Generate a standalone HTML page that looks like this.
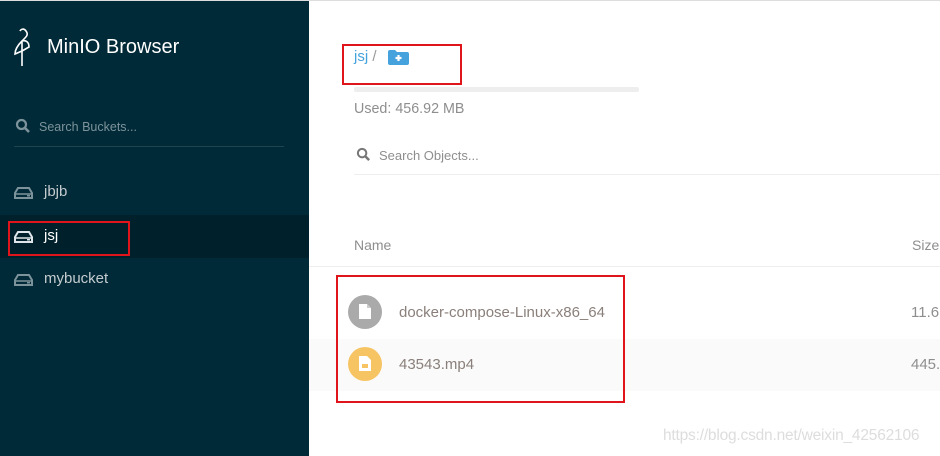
<!DOCTYPE html>
<html><head><style>
*{margin:0;padding:0;box-sizing:border-box}
body{width:940px;height:456px;overflow:hidden;font-family:"Liberation Sans",sans-serif;background:#fff;position:relative}
.sb{position:absolute;left:0;top:0;width:309px;height:456px;background:#002a37;border-top:1px solid #ddd}
.a{position:absolute}
.red{position:absolute;border:2px solid #e0151b}
.bk{position:absolute;left:0;width:309px;height:43px;color:#c5ccd0;font-size:15px}
.bk span{position:absolute;left:44px;top:12px}
.bk svg{position:absolute;left:13px;top:15px}
</style></head><body>
<div class="sb">
<svg class="a" style="left:13px;top:26px" width="22" height="40" viewBox="0 0 22 40" fill="none" stroke="#fff" stroke-width="1.6"><path d="M9 39V14M9 14C13 10 16 8 13 4C11 1 8 2 7 4M9 14C5 18 2 22 2 27L9 24M9 24L16 20C16 15 13 13 9 14"/></svg>
<div class="a" style="left:47px;top:35px;color:#fff;font-size:20px">MinIO Browser</div>
<svg class="a" style="left:15px;top:117px" width="16" height="16" viewBox="0 0 16 16"><circle cx="6.5" cy="6.5" r="4.5" stroke="#7d939b" stroke-width="2.2" fill="none"/><path d="M10 10l4 4" stroke="#7d939b" stroke-width="2.6"/></svg>
<div class="a" style="left:39px;top:119px;color:#7d939b;font-size:12.5px">Search Buckets...</div>
<div class="a" style="left:14px;top:145px;width:270px;height:1px;background:#1e4450"></div>
<div class="bk" style="top:170px"><svg width="21" height="14" viewBox="0 0 21 14"><path d="M2 7L5 2h11l3 5v5H2z" stroke="#7d939b" stroke-width="2" fill="none"/><path d="M2 8h17" stroke="#7d939b" stroke-width="1.5"/><rect x="14" y="9" width="3" height="1.5" fill="#7d939b"/></svg><span>jbjb</span></div>
<div class="bk" style="top:214px;background:#00212b;color:#fff"><svg width="21" height="14" viewBox="0 0 21 14"><path d="M2 7L5 2h11l3 5v5H2z" stroke="#dfe5e8" stroke-width="2" fill="none"/><path d="M2 8h17" stroke="#dfe5e8" stroke-width="1.5"/><rect x="14" y="9" width="3" height="1.5" fill="#dfe5e8"/></svg><span>jsj</span></div>
<div class="bk" style="top:257px"><svg width="21" height="14" viewBox="0 0 21 14"><path d="M2 7L5 2h11l3 5v5H2z" stroke="#7d939b" stroke-width="2" fill="none"/><path d="M2 8h17" stroke="#7d939b" stroke-width="1.5"/><rect x="14" y="9" width="3" height="1.5" fill="#7d939b"/></svg><span>mybucket</span></div>
</div>
<div class="red" style="left:8px;top:221px;width:122px;height:35px"></div>
<div class="a" style="left:309px;top:0;width:631px;height:1px;background:#ddd"></div>
<div class="a" style="left:354px;top:48px;color:#46a2dc;font-size:15px">jsj <span style="color:#999">/</span></div>
<svg class="a" style="left:388px;top:50px" width="21" height="15" viewBox="0 0 21 15"><path d="M0 2a2 2 0 0 1 2-2h5l2 2h10a2 2 0 0 1 2 2v9a2 2 0 0 1-2 2H2a2 2 0 0 1-2-2z" fill="#46a2dc"/><path d="M10.5 5v6M7.5 8h6" stroke="#fff" stroke-width="2.2"/></svg>
<div class="red" style="left:342px;top:44px;width:120px;height:41px"></div>
<div class="a" style="left:354px;top:87px;width:285px;height:5px;background:#eee;border-radius:2px"></div>
<div class="a" style="left:354px;top:101px;color:#8e8e8e;font-size:14.3px">Used: 456.92 MB</div>
<svg class="a" style="left:356px;top:147px" width="15" height="15" viewBox="0 0 16 16"><circle cx="6.5" cy="6.5" r="4.5" stroke="#777" stroke-width="2.2" fill="none"/><path d="M10 10l4 4" stroke="#777" stroke-width="2.6"/></svg>
<div class="a" style="left:379px;top:148px;color:#8e8e8e;font-size:13px">Search Objects...</div>
<div class="a" style="left:354px;top:174px;width:586px;height:1px;background:#eee"></div>
<div class="a" style="left:354px;top:237px;color:#8e8e8e;font-size:14px">Name</div>
<div class="a" style="left:912px;top:237px;color:#8e8e8e;font-size:14px">Size</div>
<div class="a" style="left:309px;top:266px;width:631px;height:1px;background:#eee"></div>
<div class="a" style="left:309px;top:339px;width:631px;height:52px;background:#fafafa"></div>
<div class="a" style="left:348px;top:295px;width:34px;height:34px;border-radius:50%;background:#aaa"></div>
<svg class="a" style="left:359px;top:304px" width="12" height="15" viewBox="0 0 12 15"><path d="M0 0h8l4 4v11H0z" fill="#fff"/><path d="M8 0v4h4" fill="#ccc"/></svg>
<div class="a" style="left:399px;top:304px;color:#8a7f7a;font-size:15px">docker-compose-Linux-x86_64</div>
<div class="a" style="left:911px;top:304px;color:#8e8e8e;font-size:15px">11.6</div>
<div class="a" style="left:348px;top:347px;width:34px;height:34px;border-radius:50%;background:#f7c463"></div>
<svg class="a" style="left:359px;top:356px" width="12" height="15" viewBox="0 0 12 15"><path d="M0 0h8l4 4v11H0z" fill="#fff"/><rect x="3" y="8" width="6" height="4" fill="#f7c463"/></svg>
<div class="a" style="left:399px;top:356px;color:#8a7f7a;font-size:15px">43543.mp4</div>
<div class="a" style="left:911px;top:356px;color:#8e8e8e;font-size:15px">445.</div>
<div class="red" style="left:336px;top:275px;width:289px;height:128px"></div>
<div class="a" style="left:663px;top:427px;color:#ddd;font-size:15.5px;letter-spacing:-0.2px">https://blog.csdn.net/weixin_42562106</div>
</body></html>
